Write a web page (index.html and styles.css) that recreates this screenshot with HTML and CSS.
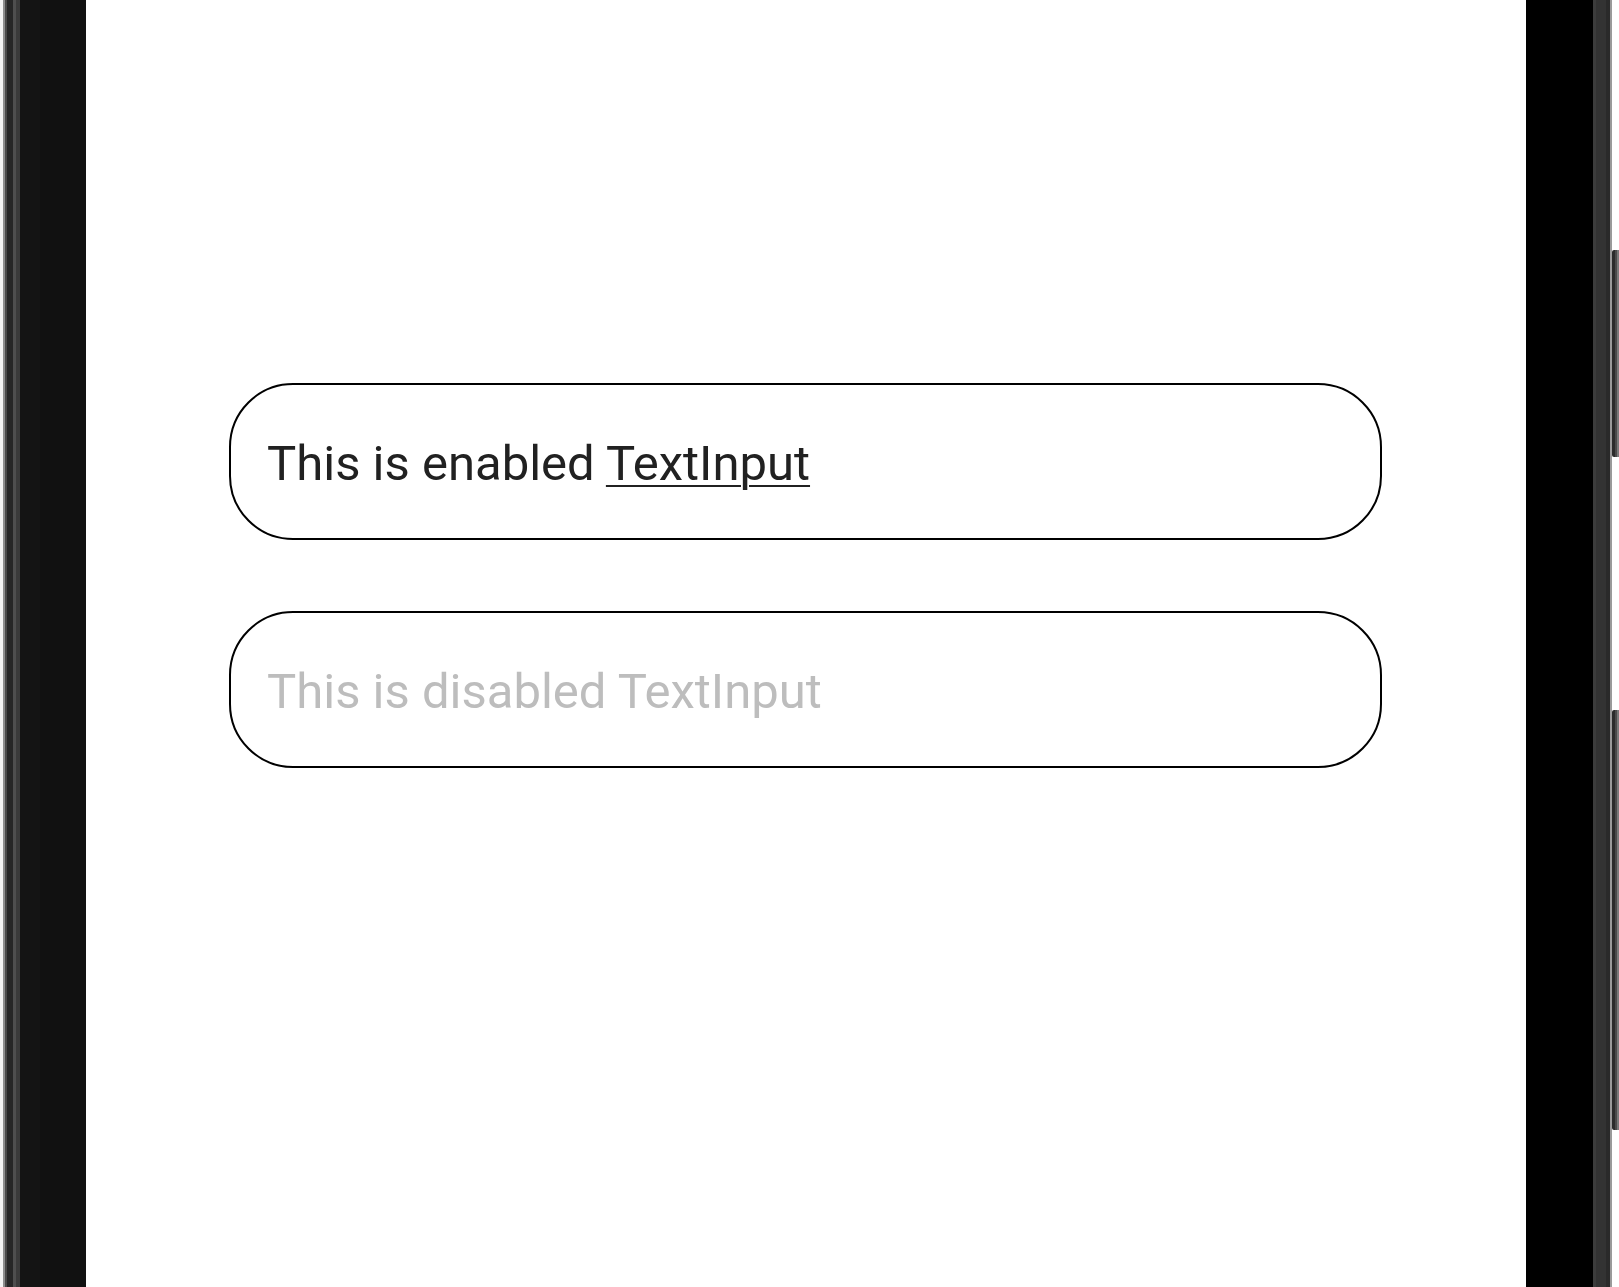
FILE: index.html
```html
<!DOCTYPE html>
<html lang="en">
<head>
<meta charset="utf-8">
<title>TextInput</title>
<link rel="stylesheet" href="styles.css">
</head>
<body>
<div class="device">
  <div class="bezel-left"></div>
  <main class="screen">
    <div class="fields">
      <div class="field">
        <span class="value">This is enabled <span class="composing">TextInput</span></span>
      </div>
      <div class="field field-disabled">
        <span class="value">This is disabled TextInput</span>
      </div>
    </div>
  </main>
  <div class="bezel-right">
    <div class="side-button side-button-top"></div>
    <div class="side-button side-button-bottom"></div>
  </div>
</div>
</body>
</html>
```
FILE: styles.css
```css
html, body {
  margin: 0;
  padding: 0;
  background: #ffffff;
}

.device {
  display: flex;
  width: 1619px;
  height: 1287px;
  overflow: hidden;
}

.bezel-left {
  width: 86px;
  flex: none;
  background: linear-gradient(to right,
    #f4f4f4 0 3px,
    #8e8e8e 3px 5px,
    #4a4a4a 5px 7px,
    #262626 7px 13px,
    #4e4e4e 13px 16px,
    #3a3a3a 16px 20px,
    #141414 20px 40px,
    #111111 40px);
}

.screen {
  flex: 1;
  background: #ffffff;
}

.fields {
  display: flex;
  flex-direction: column;
  gap: 71px;
  padding-top: 383px;
  padding-left: 143px;
}

.field {
  box-sizing: border-box;
  width: 1153px;
  height: 157px;
  border: 2px solid #000000;
  border-radius: 64px;
  display: flex;
  align-items: center;
  padding-left: 36px;
  padding-top: 3px;
}

.value {
  font-family: Roboto, "Liberation Sans", sans-serif;
  font-size: 49px;
  color: #212121;
  white-space: nowrap;
}

.composing {
  text-decoration: underline;
  text-decoration-thickness: 2px;
  text-underline-offset: 5px;
}

.field-disabled .value {
  color: #bdbdbd;
}

.bezel-right {
  position: relative;
  width: 93px;
  flex: none;
  background: linear-gradient(to right,
    #000000 0 67px,
    #3c3c3c 67px 70px,
    #333333 70px 80px,
    #2a2a2a 80px 84px,
    #9a9a9a 84px 86px,
    #ffffff 86px);
}

.side-button {
  position: absolute;
  left: 86px;
  width: 7px;
  background: linear-gradient(to right, #2b2b2b 0 3px, #4a4a4a 3px 5px, #7a7a7a 5px);
  border-radius: 2px 0 0 2px;
}

.side-button-top {
  top: 250px;
  height: 207px;
}

.side-button-bottom {
  top: 710px;
  height: 420px;
}
```
